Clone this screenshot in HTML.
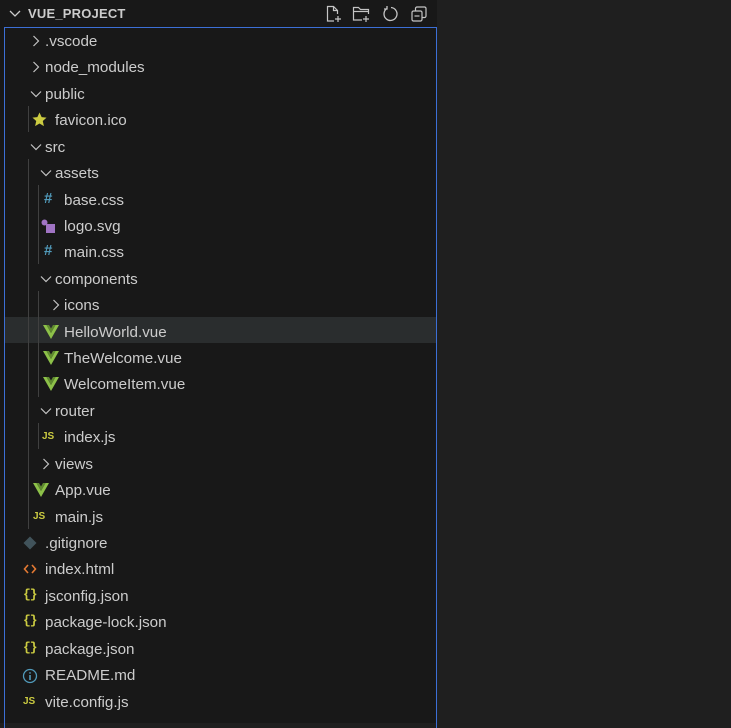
<!DOCTYPE html>
<html><head><meta charset="utf-8"><style>
body{margin:0;width:731px;height:723px;background:#1f1f1f;overflow:hidden;font-family:"Segoe UI","Liberation Sans",sans-serif;}
#panel{position:absolute;left:0;top:0;width:437px;height:723px;background:#181818;}
#frame{position:absolute;left:4px;top:27px;width:431px;height:700px;border:1px solid #3c6fd6;border-bottom:none;}
.hdr{position:absolute;left:28px;top:6px;font-size:13px;font-weight:bold;color:#cccccc;letter-spacing:0.2px}
.row{position:absolute;left:5px;width:431px;height:26px;}
.sel{background:#2a2d2e}
.t{position:absolute;font-size:15.2px;color:#cccccc;white-space:nowrap;line-height:20px}
.g{position:absolute;width:1px;background:#404040}
svg{position:absolute}
</style></head><body>
<div id="panel"></div>
<svg style="left:9px;top:9px" width="12" height="10" viewBox="0 0 12 10"><path d="M1 2 L6 7 L11 2" fill="none" stroke="#ccc" stroke-width="1.3"/></svg>
<div class="hdr">VUE_PROJECT</div>
<svg style="left:325px;top:5px" width="18" height="18" viewBox="0 0 18 18" fill="none" stroke="#c5c5c5" stroke-width="1.2"><path d="M9 16H2.5V1.5h6l4 4V9"/><path d="M8.5 1.5v4h4"/><path d="M13 11v6M10 14h6"/></svg>
<svg style="left:352px;top:5px" width="20" height="18" viewBox="0 0 20 18" fill="none" stroke="#c5c5c5" stroke-width="1.2"><path d="M10 15H1.5V2.5h5l2 2h8V9"/><path d="M1.5 6.5h15"/><path d="M14 11v6M11 14h6"/></svg>
<svg style="left:382px;top:5px" width="18" height="18" viewBox="0 0 18 18" fill="none" stroke="#c5c5c5" stroke-width="1.3"><path d="M5 3.5A6.5 6.5 0 1 0 9 2.5"/><path d="M5 1v3H2"/></svg>
<svg style="left:410px;top:5px" width="18" height="18" viewBox="0 0 18 18" fill="none" stroke="#c5c5c5" stroke-width="1.2"><rect x="2" y="6" width="10" height="10" rx="1.5"/><path d="M5.5 6V3.5A1.5 1.5 0 0 1 7 2h7.5A1.5 1.5 0 0 1 16 3.5V11a1.5 1.5 0 0 1-1.5 1.5H12"/><path d="M4.5 11h5"/></svg>
<div id="frame"></div>
<div class="row sel" style="top:317px"></div>
<div class="g" style="left:28px;top:106px;height:26px"></div>
<div class="g" style="left:28px;top:159px;height:370px"></div>
<div class="g" style="left:38px;top:185px;height:79px"></div>
<div class="g" style="left:38px;top:291px;height:106px"></div>
<div class="g" style="left:38px;top:423px;height:26px"></div>
<div id="rows"></div>
<script>
const C={
chev:(o)=>`<svg style="left:0;top:8px" width="12" height="12" viewBox="0 0 12 12"><path d="${o?'M1 3.5 L6 8.5 L11 3.5':'M3.5 1 L8.5 6 L3.5 11'}" fill="none" stroke="#c5c5c5" stroke-width="1.2"/></svg>`,
vue:`<svg style="left:0;top:7px" width="16" height="14" viewBox="0 0 16 14"><path d="M0 0h3.5L8 8 12.5 0H16L8 14z" fill="#8dc149"/><path d="M3.5 0h2.5L8 3.5 10 0h2.5L8 8z" fill="#5f8a2f"/></svg>`,
js:`<span style="position:absolute;left:0;top:8px;font:bold 10px 'Liberation Sans',sans-serif;color:#cbcb41">JS</span>`,
css:`<span style="position:absolute;left:0;top:4px;font:bold 15px 'Liberation Sans',sans-serif;color:#519aba">#</span>`,
svg:`<svg style="left:0;top:7px" width="16" height="16" viewBox="0 0 16 16"><circle cx="3.5" cy="3.5" r="3" fill="#a074c4"/><rect x="5" y="5" width="9" height="9" fill="#a074c4"/></svg>`,
star:`<svg style="left:0;top:6px" width="15" height="15" viewBox="0 0 16 16"><path d="M8 0.5l2.3 5 5.2.5-4 3.6 1.2 5.4L8 12.3 3.3 15l1.2-5.4-4-3.6 5.2-.5z" fill="#cbcb41"/></svg>`,
git:`<svg style="left:0;top:7px" width="14" height="14" viewBox="0 0 14 14"><path d="M7 0.5L13.5 7 7 13.5 0.5 7z" fill="#41535b"/></svg>`,
html:`<svg style="left:0;top:7px" width="14" height="14" viewBox="0 0 14 14"><path d="M5 3L1.5 7 5 11M9 3l3.5 4L9 11" fill="none" stroke="#e37933" stroke-width="1.6"/></svg>`,
json:`<span style="position:absolute;left:0;top:5px;font:bold 13px 'Liberation Mono',monospace;color:#cbcb41;letter-spacing:-1px">{}</span>`,
info:`<svg style="left:0;top:7px" width="16" height="16" viewBox="0 0 16 16"><circle cx="8" cy="8" r="6.5" fill="none" stroke="#519aba" stroke-width="1.3"/><path d="M8 7v5M8 4.2v1.4" stroke="#519aba" stroke-width="1.6"/></svg>`
};
const R=[
['chev0',30,'.vscode'],['chev0',30,'node_modules'],['chev1',30,'public'],['star',32,'favicon.ico',55],
['chev1',30,'src'],['chev1',40,'assets',55],['css',44,'base.css',64],['svg',41,'logo.svg',64],['css',44,'main.css',64],
['chev1',40,'components',55],['chev0',50,'icons',64],['vue',43,'HelloWorld.vue',64],['vue',43,'TheWelcome.vue',64],['vue',43,'WelcomeItem.vue',64],
['chev1',40,'router',55],['js',42,'index.js',64],['chev0',40,'views',55],['vue',33,'App.vue',55],['js',33,'main.js',55],
['git',23,'.gitignore'],['html',23,'index.html'],['json',23,'jsconfig.json'],['json',23,'package-lock.json'],['json',23,'package.json'],['info',22,'README.md'],['js',23,'vite.config.js']];
let h='';
R.forEach((r,i)=>{
 const top=Math.round(27+i*26.42);
 let ic=r[0].startsWith('chev')?C.chev(r[0]=='chev1'):C[r[0]];
 const tx=r[3]||45;
 h+=`<div style="position:absolute;left:${r[1]}px;top:${top}px;width:20px;height:26px">${ic}</div><div class="t" style="left:${tx}px;top:${top+5}px">${r[2]}</div>`;
});
document.getElementById('rows').innerHTML=h;
</script>
</body></html>
